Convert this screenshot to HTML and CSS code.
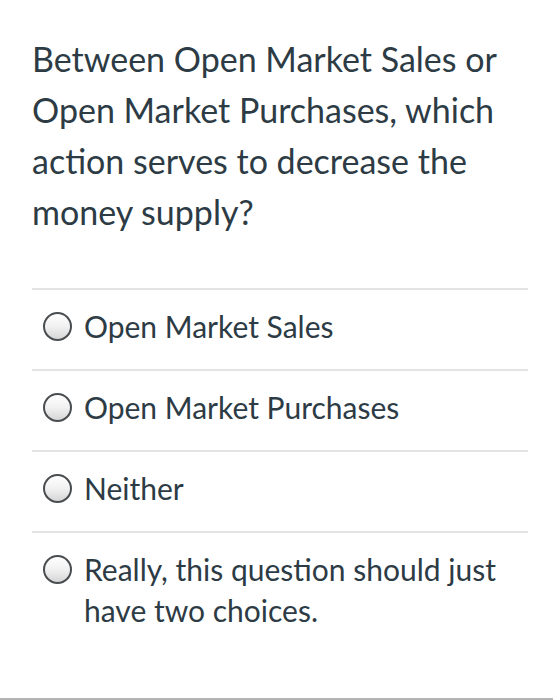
FILE: index.html
```html
<!DOCTYPE html>
<html lang="en">
<head>
<meta charset="utf-8">
<title>Question</title>
<link rel="stylesheet" href="styles.css">
</head>
<body>
<main class="quiz">
  <p class="question">Between Open Market Sales or Open Market Purchases, which action serves to decrease the money supply?</p>
  <ul class="answers">
    <li class="answer"><span class="radio"></span><span class="label">Open Market Sales</span></li>
    <li class="answer"><span class="radio"></span><span class="label">Open Market Purchases</span></li>
    <li class="answer"><span class="radio"></span><span class="label">Neither</span></li>
    <li class="answer"><span class="radio"></span><span class="label">Really, this question should just have two choices.</span></li>
  </ul>
</main>
</body>
</html>
```

FILE: styles.css
```css
html, body {
  margin: 0;
  padding: 0;
  background: #ffffff;
}
body {
  min-height: 100vh;
  box-sizing: border-box;
  border-bottom: 2px solid #b4b4b4;
  font-family: Lato, "Open Sans", sans-serif;
  color: #2d3b45;
}
.quiz {
  padding: 33px 25px 0 32px;
}
.question {
  margin: 0;
  font-size: 34px;
  line-height: 51px;
  width: 496px;
}
.answers {
  list-style: none;
  margin: 51px 0 0 0;
  padding: 0;
}
.answer {
  display: flex;
  align-items: flex-start;
  border-top: 2px solid #e1e3e5;
  padding: 16px 0 22px 0;
}
.radio {
  flex: none;
  width: 25px;
  height: 25px;
  margin: 6px 12px 0 11px;
  border: 2px solid #4a4d50;
  border-radius: 50%;
  background: linear-gradient(to bottom, #ffffff 0%, #f1f1f1 50%, #d6d6d6 100%);
}
.label {
  font-size: 30px;
  line-height: 41px;
  width: 440px;
}
```
